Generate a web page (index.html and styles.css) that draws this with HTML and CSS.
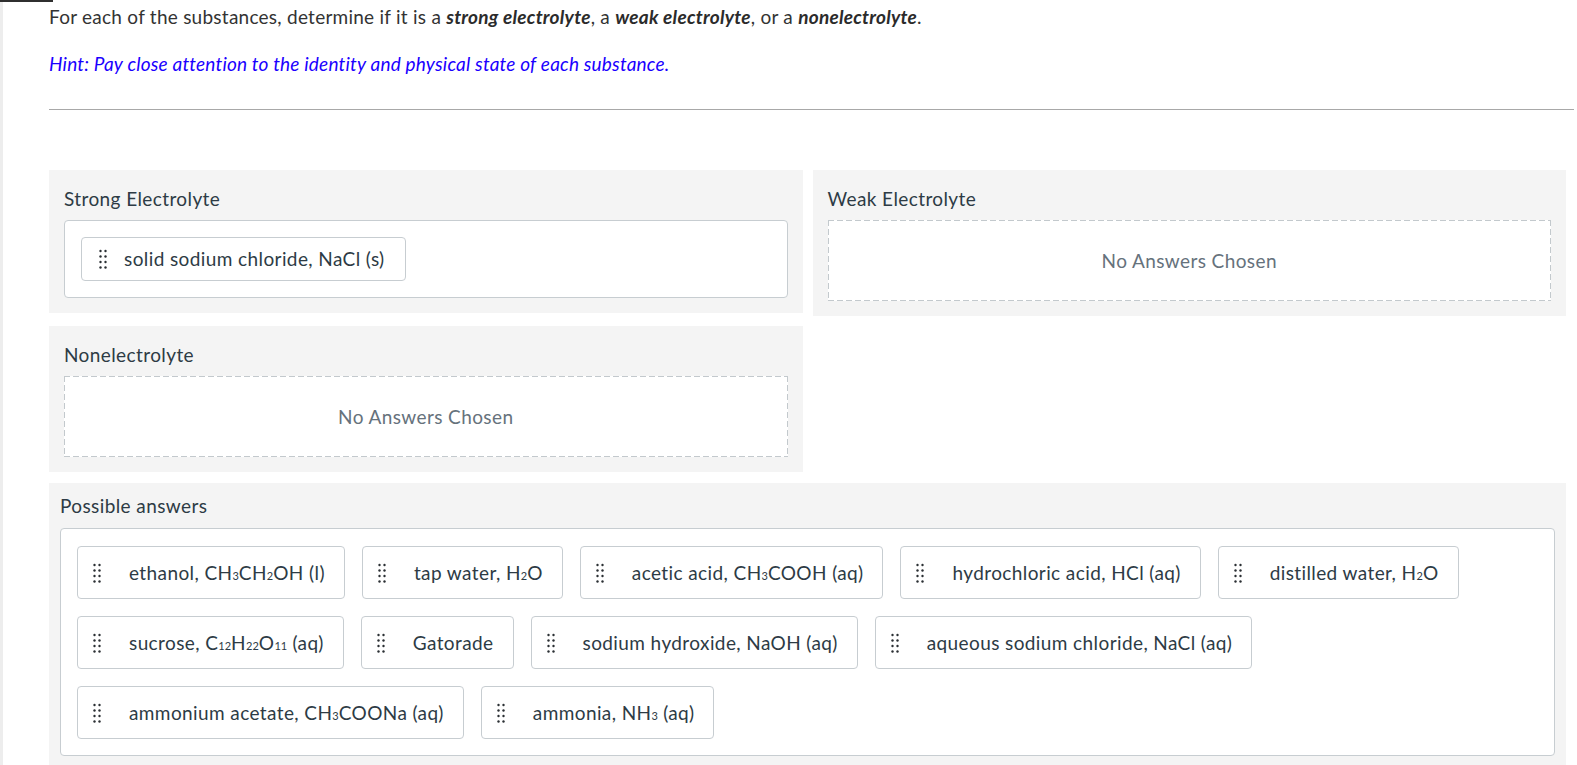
FILE: index.html
```html
<!DOCTYPE html>
<html lang="en">
<head>
<meta charset="utf-8">
<title>Electrolyte sorting</title>
<link rel="stylesheet" href="styles.css">
</head>
<body>
<div class="topbar"></div>
<main class="page">
  <p class="prompt">For each of the substances, determine if it is a <strong><em>strong electrolyte</em></strong>, a <strong><em>weak electrolyte</em></strong>, or a <strong><em>nonelectrolyte</em></strong>.</p>
  <p class="hint">Hint: Pay close attention to the identity and physical state of each substance.</p>
  <hr class="rule">

  <div class="buckets">
    <section class="bucket">
      <h3 class="bucket-title">Strong Electrolyte</h3>
      <div class="drop">
        <div class="chip compact">
          <svg class="grip" viewBox="0 0 8 20" aria-hidden="true"><use href="#dots"/></svg>
          <span>solid sodium chloride, NaCl (s)</span>
        </div>
      </div>
    </section>

    <section class="bucket">
      <h3 class="bucket-title">Weak Electrolyte</h3>
      <div class="drop empty">No Answers Chosen</div>
    </section>

    <section class="bucket">
      <h3 class="bucket-title">Nonelectrolyte</h3>
      <div class="drop empty">No Answers Chosen</div>
    </section>
  </div>

  <section class="bank">
    <h3 class="bank-title">Possible answers</h3>
    <div class="pool">
      <div class="chip"><svg class="grip" viewBox="0 0 8 20" aria-hidden="true"><use href="#dots"/></svg><span>ethanol, CH<sub>3</sub>CH<sub>2</sub>OH (l)</span></div>
      <div class="chip"><svg class="grip" viewBox="0 0 8 20" aria-hidden="true"><use href="#dots"/></svg><span>tap water, H<sub>2</sub>O</span></div>
      <div class="chip"><svg class="grip" viewBox="0 0 8 20" aria-hidden="true"><use href="#dots"/></svg><span>acetic acid, CH<sub>3</sub>COOH (aq)</span></div>
      <div class="chip"><svg class="grip" viewBox="0 0 8 20" aria-hidden="true"><use href="#dots"/></svg><span>hydrochloric acid, HCl (aq)</span></div>
      <div class="chip"><svg class="grip" viewBox="0 0 8 20" aria-hidden="true"><use href="#dots"/></svg><span>distilled water, H<sub>2</sub>O</span></div>
      <div class="chip"><svg class="grip" viewBox="0 0 8 20" aria-hidden="true"><use href="#dots"/></svg><span>sucrose, C<sub>12</sub>H<sub>22</sub>O<sub>11</sub> (aq)</span></div>
      <div class="chip"><svg class="grip" viewBox="0 0 8 20" aria-hidden="true"><use href="#dots"/></svg><span>Gatorade</span></div>
      <div class="chip"><svg class="grip" viewBox="0 0 8 20" aria-hidden="true"><use href="#dots"/></svg><span>sodium hydroxide, NaOH (aq)</span></div>
      <div class="chip"><svg class="grip" viewBox="0 0 8 20" aria-hidden="true"><use href="#dots"/></svg><span>aqueous sodium chloride, NaCl (aq)</span></div>
      <div class="chip"><svg class="grip" viewBox="0 0 8 20" aria-hidden="true"><use href="#dots"/></svg><span>ammonium acetate, CH<sub>3</sub>COONa (aq)</span></div>
      <div class="chip"><svg class="grip" viewBox="0 0 8 20" aria-hidden="true"><use href="#dots"/></svg><span>ammonia, NH<sub>3</sub> (aq)</span></div>
    </div>
  </section>
</main>

<svg class="defs" aria-hidden="true">
  <defs>
    <g id="dots" fill="#2a2f33">
      <circle cx="1.5" cy="2" r="1.2"/><circle cx="6.5" cy="2" r="1.2"/>
      <circle cx="1.5" cy="7.5" r="1.2"/><circle cx="6.5" cy="7.5" r="1.2"/>
      <circle cx="1.5" cy="13" r="1.2"/><circle cx="6.5" cy="13" r="1.2"/>
      <circle cx="1.5" cy="18.5" r="1.2"/><circle cx="6.5" cy="18.5" r="1.2"/>
    </g>
  </defs>
</svg>
</body>
</html>
```

FILE: styles.css
```css
* { box-sizing: border-box; }

html, body {
  margin: 0;
  padding: 0;
  background: #fff;
}

body {
  font-family: Lato, "Noto Sans", sans-serif;
  font-size: 19px;
  line-height: 27px;
  letter-spacing: 0.4px;
  color: #333;
  overflow: hidden;
}

.defs {
  width: 0;
  height: 0;
  display: block;
}

/* short dark tab edge along the very top */
.topbar {
  width: 53px;
  height: 2px;
  background: #2f2f2f;
}

.page {
  border-left: 3px solid #ededed;
  padding: 1px 11px 0 46px;
  min-height: 763px;
}

.prompt {
  margin: 0;
  letter-spacing: 0.25px;
}

.prompt strong {
  color: #2b2b2b;
}

.hint {
  margin: 20px 0 0;
  color: #1a00ff;
  font-style: italic;
  letter-spacing: 0.2px;
}

.rule {
  margin: 32px -8px 0 0;
  border: 0;
  border-top: 1px solid #a8a8a8;
  height: 0;
}

/* drop targets */
.buckets {
  display: grid;
  grid-template-columns: 1fr 1fr;
  gap: 10px;
  align-items: start;
  margin-top: 60px;
}

.bucket {
  background: #f4f4f4;
  padding: 15px;
}

.bucket-title,
.bank-title {
  margin: 0 0 8px;
  font-size: 19px;
  font-weight: 400;
  line-height: 27px;
  color: #2d3b45;
}

.drop {
  background: #fff;
  border: 1px solid #c7cdd1;
  border-radius: 4px;
  padding: 16px;
  display: flex;
  flex-wrap: wrap;
  gap: 17px;
}

.drop.empty {
  border: 0;
  border-radius: 0;
  min-height: 81px;
  align-items: center;
  justify-content: center;
  color: #66727c;
  background:
    linear-gradient(90deg, #c3c9cd 6px, transparent 6px) 0 0 / 9px 1px repeat-x,
    linear-gradient(90deg, #c3c9cd 6px, transparent 6px) 0 100% / 9px 1px repeat-x,
    linear-gradient(180deg, #c3c9cd 6px, transparent 6px) 0 0 / 1px 9px repeat-y,
    linear-gradient(180deg, #c3c9cd 6px, transparent 6px) 100% 0 / 1px 9px repeat-y,
    #fff;
}

/* answer bank */
.bank {
  background: #f4f4f4;
  padding: 9px 11px 11px;
  margin-top: 11px;
}

.bank-title {
  margin-bottom: 9px;
}

.pool {
  background: #fff;
  border: 1px solid #c7cdd1;
  border-radius: 4px;
  padding: 17px 16px 16px;
  display: flex;
  flex-wrap: wrap;
  gap: 17px;
}

/* draggable answer */
.chip {
  display: inline-flex;
  align-items: center;
  background: #fff;
  border: 1px solid #c7cdd1;
  border-radius: 4px;
  color: #2d3b45;
  padding: 12px 19px 12px 15px;
  white-space: nowrap;
}

.chip .grip {
  width: 8px;
  height: 20px;
  flex: none;
  margin-right: 28px;
}

.chip.compact {
  padding: 7px 20px 8px 17px;
}

.chip.compact .grip {
  margin-right: 17px;
}

sub {
  font-size: 11px;
  line-height: 0;
  letter-spacing: 0;
  vertical-align: baseline;
}
```
